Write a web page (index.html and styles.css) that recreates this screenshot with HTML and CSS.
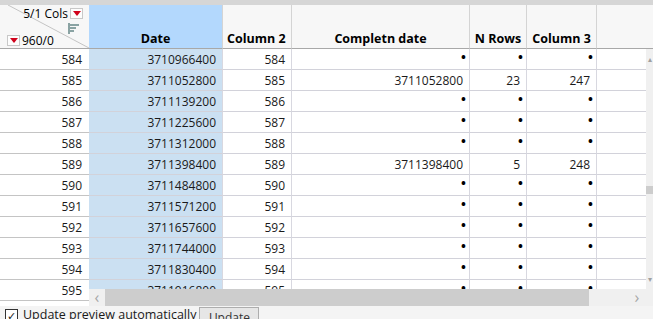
FILE: index.html
```html
<!DOCTYPE html>
<html lang="en">
<head>
    <meta charset="UTF-8">
    <title>Data Table Preview</title>
    <link rel="stylesheet" href="styles.css">
</head>
<body>
    <div class="topbar"></div>
    <div class="grid">
        <table class="data">
            <thead>
                <tr>
                    <th class="corner">
                        <svg class="diag" width="89" height="43"><line x1="8" y1="0" x2="89" y2="43" stroke="#c4c4c4" stroke-width="1"/></svg>
                        <div class="corner-top">5/1 Cols <span class="menu-btn"></span></div>
                        <svg class="sort-icon" width="12" height="11" viewBox="0 0 12 11">
                            <rect x="0" y="0" width="2" height="11" fill="#8aa3a3"/>
                            <rect x="2" y="1" width="9" height="2" fill="#8aa3a3"/>
                            <rect x="2" y="4" width="6" height="2" fill="#8aa3a3"/>
                            <rect x="2" y="7" width="4" height="2" fill="#8aa3a3"/>
                        </svg>
                        <div class="corner-bottom"><span class="menu-btn"></span> 960/0</div>
                    </th>
                    <th class="c-date sel">Date</th>
                    <th class="c-col2 left">Column 2</th>
                    <th class="c-comp">Completn date</th>
                    <th class="c-nrows">N Rows</th>
                    <th class="c-col3">Column 3</th>
                    <th class="c-empty"></th>
                </tr>
            </thead>
            <tbody id="rows"></tbody>
        </table>
        <div class="vscroll">
            <span class="varrow up">&#9652;</span>
            <div class="vthumb"></div>
            <span class="varrow down">&#9662;</span>
        </div>
        <div class="hscroll">
            <span class="harrow">&lsaquo;</span>
            <div class="hthumb"></div>
            <span class="harrow right">&rsaquo;</span>
        </div>
    </div>
    <div class="footer">
        <label class="check"><span class="box">&#10003;</span> Update preview automatically</label>
        <button class="update-btn">Update</button>
    </div>

    <script>
        const extra = {
            585: ['3711052800', '23', '247'],
            589: ['3711398400', '5', '248']
        };
        const dot = '<span class="miss">\u2022</span>';
        let html = '';
        for (let i = 584; i <= 595; i++) {
            const date = 3710966400 + (i - 584) * 86400;
            const e = extra[i] || [dot, dot, dot];
            html += '<tr>' +
                '<td class="label">' + i + '</td>' +
                '<td class="sel">' + date + '</td>' +
                '<td>' + i + '</td>' +
                '<td>' + e[0] + '</td>' +
                '<td>' + e[1] + '</td>' +
                '<td>' + e[2] + '</td>' +
                '<td></td>' +
                '</tr>';
        }
        document.getElementById('rows').innerHTML = html;
    </script>
</body>
</html>
```

FILE: styles.css
```css
body {
    margin: 0;
    padding: 0;
    font-family: "Open Sans", "Noto Sans", sans-serif;
    font-size: 12px;
    color: #1a1a1a;
    background-color: #f4f4f4;
    width: 653px;
    height: 319px;
    overflow: hidden;
}
.topbar {
    height: 5px;
    background-color: #d6d6d6;
}
.grid {
    position: relative;
    height: 301px;
    overflow: hidden;
    background: #fff;
}
.data {
    border-collapse: separate;
    border-spacing: 0;
    table-layout: fixed;
    width: 653px;
}
.data th {
    box-sizing: border-box;
    height: 44px;
    padding: 0 4px 1px;
    background-color: #f7f7f7;
    border-bottom: 1px solid #a8a8a8;
    border-right: 1px solid #d4d4d4;
    font-weight: 700;
    font-size: 12.5px;
    vertical-align: bottom;
    text-align: center;
    white-space: nowrap;
    color: #000;
}
.data th.left {
    text-align: left;
}
.data th.sel {
    background-color: #b3d8fd;
}
.corner { width: 89px; position: relative; }
.c-date { width: 134px; }
.c-col2 { width: 69px; }
.c-comp { width: 178px; }
.c-nrows { width: 57px; }
.c-col3 { width: 70px; }
.c-empty { width: 56px; border-right: none !important; }
.data th.corner {
    border-right: none;
    padding: 0;
    font-weight: 400;
    font-size: 12px;
}
.diag {
    position: absolute;
    left: 0;
    top: 0;
}
.corner-top {
    position: absolute;
    right: 6px;
    top: 3px;
    display: flex;
    align-items: center;
    gap: 2px;
    line-height: 11px;
}
.corner-bottom {
    position: absolute;
    left: 7px;
    bottom: 2px;
    display: flex;
    align-items: center;
    gap: 2px;
    line-height: 11px;
}
.sort-icon {
    position: absolute;
    left: 68px;
    top: 18px;
}
.menu-btn {
    display: inline-block;
    box-sizing: border-box;
    width: 13px;
    height: 11px;
    border: 1px solid #c8c8c8;
    background: #fdfdfd;
    position: relative;
}
.menu-btn::after {
    content: "";
    position: absolute;
    left: 2px;
    top: 2px;
    border-left: 4px solid transparent;
    border-right: 4px solid transparent;
    border-top: 5px solid #d0021b;
}
.data td {
    box-sizing: border-box;
    height: 21px;
    padding: 0 6px 0 4px;
    border-bottom: 1px solid #d2d2da;
    border-right: 1px solid #d8d8e0;
    text-align: right;
    white-space: nowrap;
    overflow: hidden;
}
.miss {
    display: inline-block;
    font-size: 13px;
    font-weight: 700;
    color: #000;
    line-height: 12px;
    margin-right: -3px;
    position: relative;
    top: -2px;
}
.data td.label {
    border-right: none;
    border-bottom-color: #c4c4c4;
    padding-right: 7px;
}
.data td.sel {
    background-color: #cbe0f2;
}
.data td:last-child {
    border-right: none;
}
.vscroll {
    position: absolute;
    left: 646px;
    top: 44px;
    width: 7px;
    height: 240px;
    background: #f0f0f0;
}
.vthumb {
    position: absolute;
    top: 137px;
    left: 0;
    width: 7px;
    height: 8px;
    background: #cdcdcd;
}
.varrow {
    position: absolute;
    left: 2px;
    font-size: 8px;
    color: #a0a0a0;
    line-height: 8px;
}
.varrow.up { top: 6px; }
.varrow.down { top: 226px; }
.hscroll {
    position: absolute;
    left: 89px;
    top: 284px;
    width: 564px;
    height: 17px;
    background: #f0f0f0;
    display: flex;
    align-items: center;
}
.harrow {
    width: 16px;
    text-align: center;
    font-size: 16px;
    color: #a6a6a6;
    line-height: 17px;
}
.harrow.right {
    margin-left: auto;
    margin-right: 8px;
}
.hthumb {
    width: 484px;
    height: 17px;
    background: #cdcdcd;
}
.footer {
    height: 13px;
    display: flex;
    align-items: flex-start;
    padding: 1px 0 0 5px;
    gap: 3px;
    background-color: #f4f4f4;
    font-size: 12.5px;
}
.check {
    display: flex;
    align-items: center;
    gap: 5px;
    line-height: 16px;
}
.box {
    display: inline-block;
    box-sizing: border-box;
    width: 13px;
    height: 13px;
    border: 1px solid #333;
    background: #fff;
    font-size: 11px;
    line-height: 11px;
    text-align: center;
    color: #222;
}
.update-btn {
    font-family: inherit;
    font-size: 12px;
    height: 20px;
    width: 60px;
    padding: 0;
    border: 1px solid #adadad;
    background: #e6e6e6;
    color: #333;
}
```
